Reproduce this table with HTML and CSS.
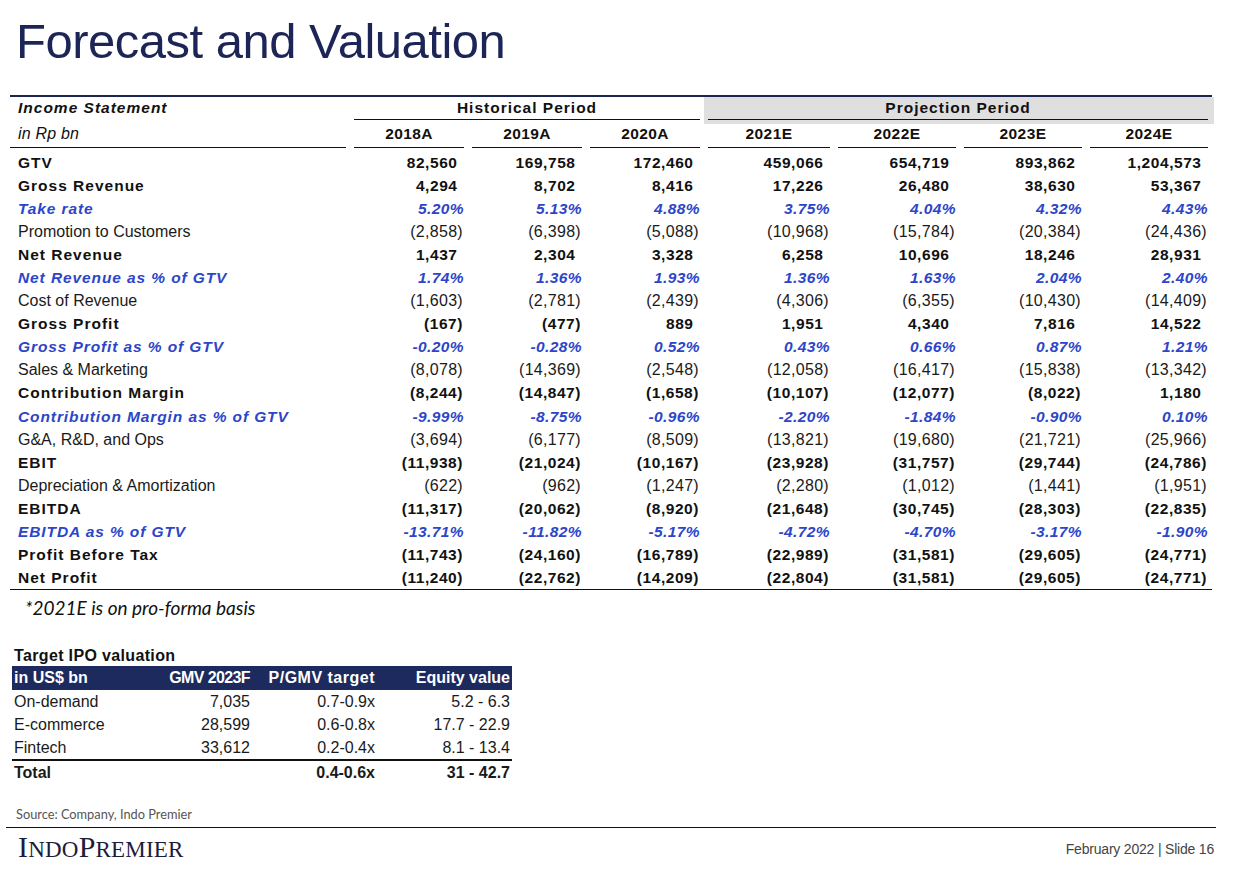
FILE: index.html
```html
<!DOCTYPE html>
<html lang="en">
<head>
<meta charset="utf-8">
<title>Forecast and Valuation</title>
<link rel="stylesheet" href="styles.css">
</head>
<body>
<div class="slide">
  <h1 class="title">Forecast and Valuation</h1>

  <div class="is">
    <div class="row hdr1">
      <div class="lbl it">Income Statement</div>
      <div class="hist">Historical Period</div>
      <div class="proj"><div class="proj-in">Projection Period</div></div>
    </div>
    <div class="row hdr2">
      <div class="lbl itn">in Rp bn</div>
      <div class="yr">2018A</div>
      <div class="yr">2019A</div>
      <div class="yr">2020A</div>
      <div class="yr">2021E</div>
      <div class="yr">2022E</div>
      <div class="yr">2023E</div>
      <div class="yr">2024E</div>
    </div>
    <div class="body">
      <div class="row b"><div class="lbl">GTV</div><div class="n p">82,560</div><div class="n p">169,758</div><div class="n p">172,460</div><div class="n p">459,066</div><div class="n p">654,719</div><div class="n p">893,862</div><div class="n p">1,204,573</div></div>
      <div class="row b"><div class="lbl">Gross Revenue</div><div class="n p">4,294</div><div class="n p">8,702</div><div class="n p">8,416</div><div class="n p">17,226</div><div class="n p">26,480</div><div class="n p">38,630</div><div class="n p">53,367</div></div>
      <div class="row bl"><div class="lbl">Take rate</div><div class="n">5.20%</div><div class="n">5.13%</div><div class="n">4.88%</div><div class="n">3.75%</div><div class="n">4.04%</div><div class="n">4.32%</div><div class="n">4.43%</div></div>
      <div class="row r"><div class="lbl">Promotion to Customers</div><div class="n">(2,858)</div><div class="n">(6,398)</div><div class="n">(5,088)</div><div class="n">(10,968)</div><div class="n">(15,784)</div><div class="n">(20,384)</div><div class="n">(24,436)</div></div>
      <div class="row b"><div class="lbl">Net Revenue</div><div class="n p">1,437</div><div class="n p">2,304</div><div class="n p">3,328</div><div class="n p">6,258</div><div class="n p">10,696</div><div class="n p">18,246</div><div class="n p">28,931</div></div>
      <div class="row bl"><div class="lbl">Net Revenue as % of GTV</div><div class="n">1.74%</div><div class="n">1.36%</div><div class="n">1.93%</div><div class="n">1.36%</div><div class="n">1.63%</div><div class="n">2.04%</div><div class="n">2.40%</div></div>
      <div class="row r"><div class="lbl">Cost of Revenue</div><div class="n">(1,603)</div><div class="n">(2,781)</div><div class="n">(2,439)</div><div class="n">(4,306)</div><div class="n">(6,355)</div><div class="n">(10,430)</div><div class="n">(14,409)</div></div>
      <div class="row b"><div class="lbl">Gross Profit</div><div class="n">(167)</div><div class="n">(477)</div><div class="n p">889</div><div class="n p">1,951</div><div class="n p">4,340</div><div class="n p">7,816</div><div class="n p">14,522</div></div>
      <div class="row bl"><div class="lbl">Gross Profit as % of GTV</div><div class="n">-0.20%</div><div class="n">-0.28%</div><div class="n">0.52%</div><div class="n">0.43%</div><div class="n">0.66%</div><div class="n">0.87%</div><div class="n">1.21%</div></div>
      <div class="row r"><div class="lbl">Sales &amp; Marketing</div><div class="n">(8,078)</div><div class="n">(14,369)</div><div class="n">(2,548)</div><div class="n">(12,058)</div><div class="n">(16,417)</div><div class="n">(15,838)</div><div class="n">(13,342)</div></div>
      <div class="row b"><div class="lbl">Contribution Margin</div><div class="n">(8,244)</div><div class="n">(14,847)</div><div class="n">(1,658)</div><div class="n">(10,107)</div><div class="n">(12,077)</div><div class="n">(8,022)</div><div class="n p">1,180</div></div>
      <div class="row bl"><div class="lbl">Contribution Margin as % of GTV</div><div class="n">-9.99%</div><div class="n">-8.75%</div><div class="n">-0.96%</div><div class="n">-2.20%</div><div class="n">-1.84%</div><div class="n">-0.90%</div><div class="n">0.10%</div></div>
      <div class="row r"><div class="lbl">G&amp;A, R&amp;D, and Ops</div><div class="n">(3,694)</div><div class="n">(6,177)</div><div class="n">(8,509)</div><div class="n">(13,821)</div><div class="n">(19,680)</div><div class="n">(21,721)</div><div class="n">(25,966)</div></div>
      <div class="row b"><div class="lbl">EBIT</div><div class="n">(11,938)</div><div class="n">(21,024)</div><div class="n">(10,167)</div><div class="n">(23,928)</div><div class="n">(31,757)</div><div class="n">(29,744)</div><div class="n">(24,786)</div></div>
      <div class="row r"><div class="lbl">Depreciation &amp; Amortization</div><div class="n">(622)</div><div class="n">(962)</div><div class="n">(1,247)</div><div class="n">(2,280)</div><div class="n">(1,012)</div><div class="n">(1,441)</div><div class="n">(1,951)</div></div>
      <div class="row b"><div class="lbl">EBITDA</div><div class="n">(11,317)</div><div class="n">(20,062)</div><div class="n">(8,920)</div><div class="n">(21,648)</div><div class="n">(30,745)</div><div class="n">(28,303)</div><div class="n">(22,835)</div></div>
      <div class="row bl"><div class="lbl">EBITDA as % of GTV</div><div class="n">-13.71%</div><div class="n">-11.82%</div><div class="n">-5.17%</div><div class="n">-4.72%</div><div class="n">-4.70%</div><div class="n">-3.17%</div><div class="n">-1.90%</div></div>
      <div class="row b"><div class="lbl">Profit Before Tax</div><div class="n">(11,743)</div><div class="n">(24,160)</div><div class="n">(16,789)</div><div class="n">(22,989)</div><div class="n">(31,581)</div><div class="n">(29,605)</div><div class="n">(24,771)</div></div>
      <div class="row b"><div class="lbl">Net Profit</div><div class="n">(11,240)</div><div class="n">(22,762)</div><div class="n">(14,209)</div><div class="n">(22,804)</div><div class="n">(31,581)</div><div class="n">(29,605)</div><div class="n">(24,771)</div></div>
    </div>
  </div>

  <p class="note">*2021E is on pro-forma basis</p>

  <div class="ipo">
    <div class="ipo-title">Target IPO valuation</div>
    <div class="irow ihead"><div>in US$ bn</div><div class="ir tight">GMV 2023F</div><div class="ir wide">P/GMV target</div><div class="ir">Equity value</div></div>
    <div class="irow"><div>On-demand</div><div class="ir">7,035</div><div class="ir">0.7-0.9x</div><div class="ir">5.2 - 6.3</div></div>
    <div class="irow"><div>E-commerce</div><div class="ir">28,599</div><div class="ir">0.6-0.8x</div><div class="ir">17.7 - 22.9</div></div>
    <div class="irow"><div>Fintech</div><div class="ir">33,612</div><div class="ir">0.2-0.4x</div><div class="ir">8.1 - 13.4</div></div>
    <div class="irow itotal"><div>Total</div><div class="ir"></div><div class="ir">0.4-0.6x</div><div class="ir">31 - 42.7</div></div>
  </div>

  <div class="source">Source: Company, Indo Premier</div>
  <div class="footer">
    <div class="logo"><span class="big">I</span>NDO<span class="big">P</span>REMIER</div>
    <div class="pg">February 2022 | Slide 16</div>
  </div>
</div>
</body>
</html>
```

FILE: styles.css
```css
* { box-sizing: border-box; }
html, body { margin: 0; padding: 0; background: #fff; }
body { font-family: "Liberation Sans", Arial, sans-serif; color: #111; }
.slide { width: 1252px; height: 872px; position: relative; overflow: hidden; }

.title {
  margin: 13px 0 0 16px;
  font-weight: 400;
  font-size: 49px;
  line-height: 56px;
  color: #1c2556;
  letter-spacing: -0.5px;
}

.is {
  margin: 26px 0 0 10px;
  width: 1202px;
  border-top: 2.5px solid #1c2450;
  font-size: 15.5px;
}
.row {
  display: grid;
  grid-template-columns: 336px 110px 110px 110px 122px 118px 118px 118px;
  column-gap: 8px;
}
.lbl { padding-left: 8px; white-space: nowrap; }
.hdr1 { height: 23px; font-weight: 700; letter-spacing: 1px; }
.hdr1 .lbl { line-height: 22px; }
.it { font-style: italic; }
.itn { font-style: italic; font-weight: 400; font-size: 16px; letter-spacing: 0.2px; }
.hist {
  grid-column: 2 / 5;
  text-align: center;
  line-height: 22px;
  border-bottom: 1.5px solid #111;
}
.proj {
  grid-column: 5 / 9;
  background: #dfdfdf;
  margin: 0 -6px -4px -4px;
  padding: 0 6px 4px 4px;
}
.proj-in {
  text-align: center;
  line-height: 22px;
  border-bottom: 1.5px solid #111;
}
.hdr2 > div {
  height: 28px;
  line-height: 28px;
  border-bottom: 1.5px solid #111;
}
.yr { text-align: center; font-weight: 700; letter-spacing: 0.4px; }

.body { padding-top: 2.5px; border-bottom: 1.5px solid #111; }
.body .row { height: 23.1px; line-height: 23.1px; }
.n { text-align: right; padding-right: 1px; white-space: nowrap; }
.n.p { padding-right: 6.5px; }
.b { font-weight: 700; letter-spacing: 1px; }
.b .n { letter-spacing: 0.55px; }
.r { font-weight: 400; font-size: 16px; color: #1a1a1a; letter-spacing: 0; }
.r .n { letter-spacing: 0.3px; }
.bl { font-weight: 700; font-style: italic; color: #2c45c9; letter-spacing: 0.9px; }
.bl .n { letter-spacing: 0.4px; padding-right: 0; }

.note {
  margin: 6px 0 0 25px;
  font-family: Lato, "Open Sans", sans-serif;
  font-style: italic;
  font-size: 19px;
  line-height: 24px;
  color: #111;
}

.ipo { margin: 26px 0 0 12px; width: 500px; font-size: 16px; }
.ipo-title { font-weight: 700; font-size: 16px; padding-left: 2px; line-height: 20px; letter-spacing: 0.35px; }
.irow {
  display: grid;
  grid-template-columns: 150px 90px 125px 135px;
  height: 23px;
  line-height: 23px;
  color: #1a1a1a;
}
.irow > div { padding-left: 2px; white-space: nowrap; }
.irow > .ir { text-align: right; padding-right: 2px; }
.ihead { background: #1c2a5e; color: #fff; font-weight: 700; height: 24px; line-height: 24px; }
.ihead .tight { letter-spacing: -0.6px; }
.ihead .wide { letter-spacing: 0.5px; }
.itotal { border-top: 2px solid #111; font-weight: 700; }

.source {
  position: absolute;
  left: 16px;
  top: 806px;
  font-family: Lato, "Open Sans", sans-serif;
  font-size: 12.8px;
  color: #555;
}
.footer {
  position: absolute;
  left: 6px;
  top: 827px;
  width: 1210px;
  border-top: 1.5px solid #111;
  display: flex;
  justify-content: space-between;
  align-items: center;
  padding: 4px 0 0 12px;
}
.logo {
  font-family: "Liberation Serif", "Times New Roman", serif;
  font-size: 23px;
  color: #1b1d3a;
  letter-spacing: 0.2px;
  line-height: 30px;
}
.logo .big { font-size: 30px; }
.pg {
  font-size: 14px;
  color: #444;
  padding-right: 2px;
  letter-spacing: -0.2px;
}
```
